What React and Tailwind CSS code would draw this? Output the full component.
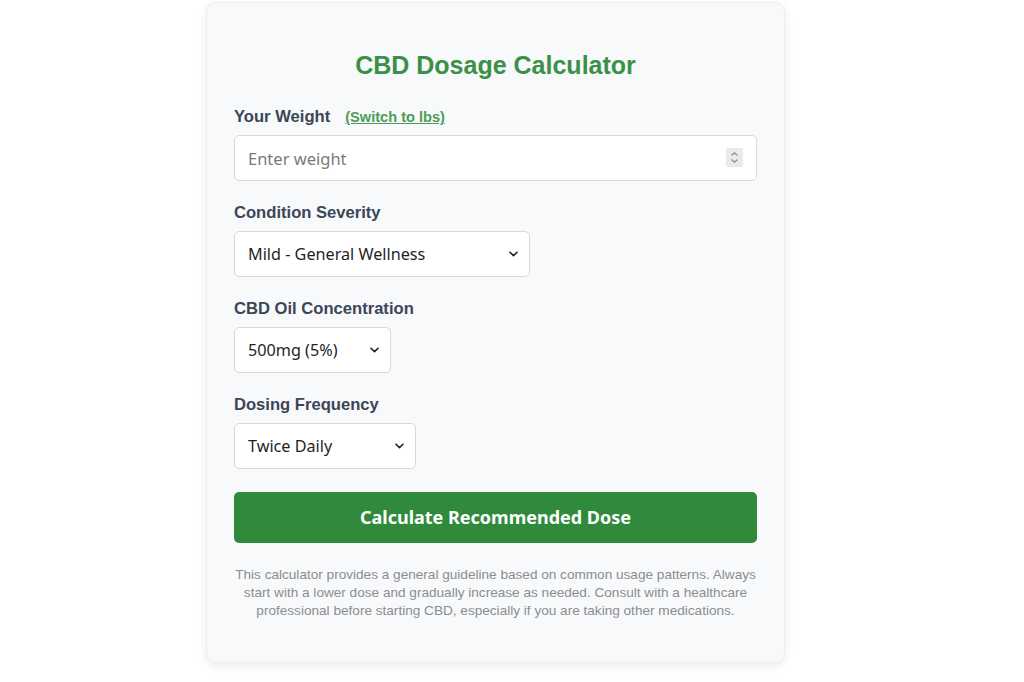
import React from "react";

function Chevron() {
  return (
    <svg width="9" height="6" viewBox="0 0 9 6" className="pointer-events-none absolute right-[12px] top-1/2 -translate-y-1/2">
      <path d="M1 1.2 L4.5 4.6 L8 1.2" fill="none" stroke="#222" strokeWidth="1.6" strokeLinecap="round" strokeLinejoin="round" />
    </svg>
  );
}

function Select({ value, width }) {
  return (
    <div className={`relative ${width}`}>
      <select
        defaultValue={value}
        className="h-[46px] w-full appearance-none rounded-[5px] border border-[#d6d9dd] bg-white pl-[13px] pr-8 text-[16.2px] text-[#1f1f1f] outline-none [font-family:'Noto_Sans',sans-serif]"
      >
        <option>{value}</option>
      </select>
      <Chevron />
    </div>
  );
}

export default function App() {
  return (
    <div className="min-h-[682px] bg-white pt-[2px]">
      <div className="ml-[206px] w-[579px] rounded-[10px] border border-[#eceef0] bg-[#f8f9fa] px-[27px] pt-[48px] pb-[42px] shadow-[0_3px_10px_rgba(0,0,0,0.08)] [font-family:'Liberation_Sans',Arial,sans-serif]">
        <h1 className="text-center text-[25px] font-bold leading-[28px] text-[#3a9047]">CBD Dosage Calculator</h1>

        <div className="mt-[28px] flex h-[20px] items-baseline leading-[20px]">
          <span className="text-[16.6px] font-bold leading-[20px] text-[#3b4657]">Your Weight</span>
          <a className="ml-[15px] text-[14.6px] font-bold leading-[20px] text-[#4c9d57] underline">(Switch to lbs)</a>
        </div>
        <div className="relative mt-[8px]">
          <input
            type="text"
            placeholder="Enter weight"
            className="h-[46px] w-full rounded-[5px] border border-[#d6d9dd] bg-white pl-[13px] text-[16.5px] text-[#1f1f1f] outline-none placeholder:text-[#7a7a7a] [font-family:'Noto_Sans',sans-serif]"
          />
          <div className="pointer-events-none absolute right-[14px] top-[13px] flex h-[19px] w-[17px] flex-col items-center justify-center rounded-[2px] bg-[#e9e9ee]">
            <svg width="9" height="13" viewBox="0 0 9 13">
              <path d="M1.5 4.5 L4.5 1.8 L7.5 4.5" fill="none" stroke="#8a8a92" strokeWidth="1.2" />
              <path d="M1.5 8.5 L4.5 11.2 L7.5 8.5" fill="none" stroke="#8a8a92" strokeWidth="1.2" />
            </svg>
          </div>
        </div>

        <div className="mt-[22px] text-[16.6px] font-bold leading-[20px] text-[#3b4657]">Condition Severity</div>
        <div className="mt-[8px]">
          <Select value="Mild - General Wellness" width="w-[296px]" />
        </div>

        <div className="mt-[22px] text-[16.6px] font-bold leading-[20px] text-[#3b4657]">CBD Oil Concentration</div>
        <div className="mt-[8px]">
          <Select value="500mg (5%)" width="w-[157px]" />
        </div>

        <div className="mt-[22px] text-[16.6px] font-bold leading-[20px] text-[#3b4657]">Dosing Frequency</div>
        <div className="mt-[8px]">
          <Select value="Twice Daily" width="w-[182px]" />
        </div>

        <button className="mt-[23px] flex h-[51px] w-full items-center justify-center rounded-[5px] bg-[#2f8b3b] text-[18px] font-bold text-white [font-family:'Noto_Sans',sans-serif]">
          Calculate Recommended Dose
        </button>

        <p className="mt-[23px] text-center text-[13.6px] leading-[18px] text-[#8a8d91]">
          This calculator provides a general guideline based on common usage patterns. Always start with a lower dose and gradually increase as needed. Consult with a healthcare professional before starting CBD, especially if you are taking other medications.
        </p>
      </div>
    </div>
  );
}
